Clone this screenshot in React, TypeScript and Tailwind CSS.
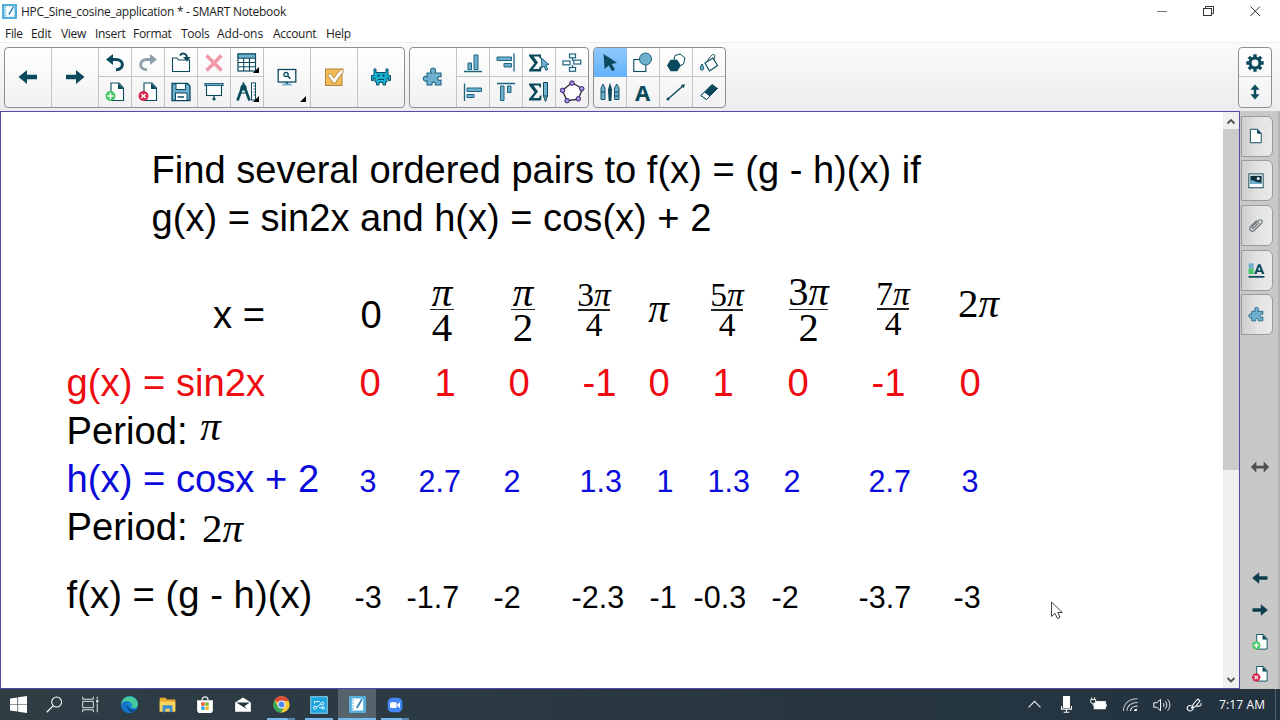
import type { ReactNode } from "react";
import clsx from "clsx";

const NAVY = "#0b4a5c";
const SKY = "#6fb0cf";

function Icon({ size = 24, children }: { size?: number; children: ReactNode }) {
  return (
    <svg width={size} height={size} viewBox="0 0 24 24" fill="none" className="block shrink-0">
      {children}
    </svg>
  );
}

/* ---------- toolbar icons ---------- */

function ArrowLeft({ size = 24, color = NAVY }: { size?: number; color?: string }) {
  return (
    <Icon size={size}>
      <path d="M2.500 12 L11 5 V9.800 H21 V14.200 H11 V19 Z" fill={color} />
    </Icon>
  );
}

function ArrowRight({ size = 24, color = NAVY }: { size?: number; color?: string }) {
  return (
    <Icon size={size}>
      <path d="M21.500 12 L13 5 V9.800 H3 V14.200 H13 V19 Z" fill={color} />
    </Icon>
  );
}

function Undo() {
  return (
    <Icon>
      <path d="M8 8.500 H13 C21.500 8.500 21.500 19 13 18.700" stroke={NAVY} strokeWidth="3" />
      <path d="M3 8.500 L10 3 V14 Z" fill={NAVY} />
    </Icon>
  );
}

function Redo() {
  return (
    <Icon>
      <path d="M16 8.500 H11 C2.500 8.500 2.500 19 11 18.700" stroke="#8b9fa9" strokeWidth="2.800" />
      <path d="M21 8.500 L14 3 V14 Z" fill="#8b9fa9" />
    </Icon>
  );
}

function OpenFile() {
  return (
    <Icon>
      <path d="M3.500 20.500 V7 H8 L9.500 9 H20.500 V20.500 Z" fill="#fff" stroke={NAVY} strokeWidth="1.1" />
      <path d="M11 4.500 C13 1.500 17 2 18 6" stroke={NAVY} strokeWidth="2" />
      <path d="M14 6 H21.500 L18 10.500 Z" fill={NAVY} />
    </Icon>
  );
}

function Cross() {
  return (
    <Icon>
      <path d="M4.500 4.500 L19.500 19.500 M19.500 4.500 L4.500 19.500" stroke="#f09aa8" strokeWidth="3.6" />
    </Icon>
  );
}

function Table() {
  return (
    <Icon>
      <rect x="3" y="3" width="17.5" height="17" fill="#fff" stroke={NAVY} strokeWidth="1.2" />
      <rect x="3" y="3" width="17.5" height="4.2" fill={SKY} stroke={NAVY} strokeWidth="1" />
      <path d="M3 11.500 H20.500 M3 15.700 H20.500 M8.700 7 V20 M14.500 7 V20" stroke={NAVY} strokeWidth="1.1" />
    </Icon>
  );
}

function PageAdd({ size = 24 }: { size?: number }) {
  return (
    <Icon size={size}>
      <path d="M8 3 H16 L20.500 8 V20.500 H8 Z" fill="#fff" stroke={NAVY} strokeWidth="1.1" />
      <path d="M15 3 L21 9 H15 Z" fill={NAVY} />
      <circle cx="7.5" cy="16" r="5" fill="#45c766" />
      <path d="M7.500 12.800 V19.200 M4.300 16 H10.700" stroke="#fff" strokeWidth="1.5" />
    </Icon>
  );
}

function PageDelete({ size = 24 }: { size?: number }) {
  return (
    <Icon size={size}>
      <path d="M8 3 H16 L20.500 8 V20.500 H8 Z" fill="#fff" stroke={NAVY} strokeWidth="1.1" />
      <path d="M15 3 L21 9 H15 Z" fill={NAVY} />
      <circle cx="7.5" cy="16" r="5" fill="#d52a50" />
      <path d="M5.400 13.900 L9.600 18.100 M9.600 13.900 L5.400 18.100" stroke="#fff" strokeWidth="1.4" />
    </Icon>
  );
}

function Save() {
  return (
    <Icon>
      <path d="M3 3.500 H18.500 L21 6 V20.500 H3 Z" fill={SKY} stroke={NAVY} strokeWidth="1.3" />
      <rect x="7" y="3.5" width="9.5" height="6" fill="#fff" stroke={NAVY} />
      <rect x="6.5" y="13" width="11.5" height="7.5" fill="#fff" stroke={NAVY} />
      <path d="M8.500 17 H15" stroke={NAVY} strokeWidth="1.5" />
    </Icon>
  );
}

function ScreenShade() {
  return (
    <Icon>
      <rect x="4.5" y="4" width="15" height="11.5" fill="#fff" stroke={NAVY} strokeWidth="1.1" />
      <path d="M2.500 4.500 H21.500" stroke={NAVY} strokeWidth="3.2" />
      <path d="M3.500 4.500 H20.500" stroke={SKY} strokeWidth="1.6" />
      <path d="M12 15.500 V19" stroke={NAVY} strokeWidth="1.2" />
      <circle cx="12" cy="19" r="1.6" fill={NAVY} />
    </Icon>
  );
}

function Measure() {
  return (
    <Icon>
      <path d="M8.500 2.500 V6" stroke={NAVY} strokeWidth="2" />
      <path d="M7 8 L2.500 20.500 M10 8 L14.500 20.500" stroke={NAVY} strokeWidth="2.6" />
      <path d="M5 13 H12" stroke={NAVY} strokeWidth="1" />
      <circle cx="8.5" cy="7.5" r="3" fill={NAVY} />
      <rect x="16.5" y="3" width="4" height="17" fill="#fff" stroke={NAVY} strokeWidth="1" />
      <path d="M18.500 6 H20.500 M18.500 9 H20.500 M18.500 12 H20.500 M18.500 15 H20.500" stroke={NAVY} strokeWidth=".9" />
    </Icon>
  );
}

function Display() {
  return (
    <Icon>
      <rect x="3.2" y="4.5" width="17.6" height="12.5" fill="#fff" stroke={NAVY} strokeWidth="1.3" />
      <circle cx="11" cy="9.5" r="2.2" fill="#d4e8f2" stroke={NAVY} strokeWidth="1.2" />
      <path d="M12.600 11 L15.400 13.600" stroke={NAVY} strokeWidth="1.5" />
      <path d="M12 17 V19" stroke={NAVY} strokeWidth="2" />
      <path d="M7.500 19.500 H16.500" stroke={SKY} strokeWidth="1.8" />
    </Icon>
  );
}

function Assess() {
  return (
    <Icon>
      <rect x="3.5" y="4" width="16.5" height="16.5" fill="#f3ba58" stroke="#b28840" strokeWidth="1" />
      <path
        d="M5.500 10.500 L8.500 8.500 L12 13 C14.500 9 17 6 21 3.500 V7.500 C18 10.500 15.500 14 13.500 18 H11 C9.500 15 7.500 12.500 5.500 10.500 Z"
        fill="#fff"
        stroke="#a9803a"
        strokeWidth=".9"
      />
    </Icon>
  );
}

function Monster() {
  return (
    <Icon>
      <path
        d="M5 4 H7 V7.500 H17 V4 H19 V10.500 H21.500 V15.500 H19.500 V13 H18 V17 H16.500 V20 H14 V17.500 H10 V20 H7.500 V17 H6 V13 H4.500 V15.500 H2.500 V10.500 H5 Z"
        fill="#17b1d4"
        stroke="#0b5267"
        strokeWidth="1"
      />
      <path d="M8.500 9.500 H10.500 V11.500 H8.500 Z M13.500 9.500 H15.500 V11.500 H13.500 Z" fill={NAVY} />
      <path d="M9 14.500 H15" stroke={NAVY} />
    </Icon>
  );
}

function Puzzle({ size = 24 }: { size?: number }) {
  return (
    <Icon size={size}>
      <path
        d="M6 8 H10.500 C8.600 5.500 9.800 3 12 3 C14.400 3 15.500 5.500 13.700 8 H20 V11.800 C17.500 11 16.500 12.500 16.500 13.500 C16.500 14.700 17.800 15.800 20 15 V20 H14.300 C14.800 17.800 13.700 17.100 12.700 17.100 C11.500 17.100 10.500 18.100 11 20 H6 V15.800 C4.300 16.800 2.300 15.700 2.300 13.700 C2.300 11.700 4.500 10.500 6 11.800 Z"
        fill={SKY}
        stroke="#1d6480"
        strokeWidth="1.1"
      />
    </Icon>
  );
}

function Bars({ d, base }: { d: string; base: string }) {
  return (
    <Icon>
      <path d={d} fill={SKY} stroke="#1d6480" strokeWidth="1" />
      <path d={base} stroke="#1d6480" strokeWidth="1.3" />
    </Icon>
  );
}

function Sigma({ pen }: { pen?: boolean }) {
  return (
    <Icon>
      <path d="M2 3.500 H14 V7.500 H12.800 L12 5.500 H6.500 L11 11.500 L6 18 H12 L13 15.500 H14.500 L14 20.500 H2 V19 L7.500 12.200 L2 5 Z" fill={NAVY} />
      {pen ? (
        <path d="M16.500 2.500 H20.500 V16 L18.500 21.500 L16.500 16 Z M16.500 16 H20.500" fill={SKY} stroke={NAVY} strokeWidth="1" />
      ) : (
        <path d="M14.500 7 L22 13.500 L18.800 14 L20.800 18.500 L18.800 19.300 L17 15 L14.800 17 Z" fill={SKY} stroke="#1d6480" strokeWidth="1" />
      )}
    </Icon>
  );
}

function FlowBoxes() {
  return (
    <Icon>
      <g fill="#fff" stroke="#1d6480" strokeWidth="1.2">
        <path d="M12.500 6.500 V10 M12.500 14 V17" />
        <rect x="9.5" y="3" width="6" height="3.800" />
        <rect x="3" y="10" width="7" height="3.800" />
        <rect x="13.800" y="9.200" width="7" height="3.800" />
        <rect x="9.500" y="16.500" width="6" height="3.800" />
      </g>
    </Icon>
  );
}

function Pentagon() {
  return (
    <Icon size={26}>
      <path d="M12 3.500 L21.500 9 L18 18.500 L7.500 20 L3 10.500 Z" fill="#fff" stroke="#2c2b31" strokeWidth="1.2" />
      <g fill="#a78ce6" stroke="#33245f" strokeWidth=".9">
        <circle cx="12" cy="3.8" r="2.1" />
        <circle cx="21" cy="9" r="2.1" />
        <circle cx="17.8" cy="18.3" r="2.1" />
        <circle cx="7.5" cy="20" r="2.1" />
        <circle cx="3.3" cy="10.5" r="2.1" />
      </g>
    </Icon>
  );
}

function Pointer() {
  return (
    <Icon>
      <path d="M5.500 3 L19 11.800 L13.700 13 L17 18.500 L14.200 20.300 L10.800 14.600 L6.600 18 Z" fill={NAVY} />
    </Icon>
  );
}

function Shapes() {
  return (
    <Icon>
      <rect x="2.8" y="8.500" width="12" height="12" fill="#fff" stroke={NAVY} strokeWidth="1.1" />
      <circle cx="14.5" cy="8" r="6" fill={SKY} stroke="#1d6480" strokeWidth="1" />
    </Icon>
  );
}

function Polygons() {
  return (
    <Icon>
      <path d="M11 4.500 L16 3 L21 7 L19.500 13 L14 16 L9.500 11 Z" fill="#fff" stroke={NAVY} strokeWidth="1" />
      <path d="M6.500 8.800 H13.300 L16.800 14.500 L13.300 20.300 H6.500 L3 14.500 Z" fill={NAVY} />
    </Icon>
  );
}

function Bucket() {
  return (
    <Icon>
      <path d="M8 12 L16 7 L20.500 14.500 L12.500 20 Z" fill="#fff" stroke={NAVY} strokeWidth="1.2" />
      <path d="M10 11 C12 7 14.500 3.500 16.500 3.500 C18.500 3.500 18 6.500 16.500 9" stroke={NAVY} strokeWidth="1" />
      <path d="M5 13 C2.500 17 3 19 5 19 C7 19 7.500 17 5 13 Z" fill={SKY} stroke={NAVY} />
    </Icon>
  );
}

function Pens() {
  return (
    <Icon>
      <g fill={SKY} stroke={NAVY} strokeWidth=".9">
        <path d="M3 8 L5 4 L7 8 V19.500 H3 Z" />
        <path d="M16.500 8 L18.800 4 L21 8 V19.500 H16.500 Z" />
      </g>
      <path d="M10 9.500 L12 2.500 L14 9.500 L13.300 21 H10.700 Z" fill={NAVY} />
      <path d="M3 12 H7 M16.500 12 H21 M16.500 16 H21" stroke={NAVY} />
    </Icon>
  );
}

function LineTool() {
  return (
    <Icon>
      <path d="M4 19 L20 5" stroke={NAVY} strokeWidth="1.4" />
      <path d="M20.800 4.200 L19.800 8.200 L16.800 5 Z" fill={NAVY} />
      <circle cx="4" cy="19" r="1.5" fill={NAVY} />
    </Icon>
  );
}

function Eraser() {
  return (
    <Icon>
      <path d="M4 15.500 L15 4.500 L20.500 8.500 L9.500 19.500 Z" fill={NAVY} stroke={NAVY} strokeWidth="1" />
      <path d="M4 15.500 L7.500 12 L13 16 L9.500 19.500 Z" fill="#fff" stroke={NAVY} strokeWidth="1" />
    </Icon>
  );
}

function Gear() {
  return (
    <Icon size={22}>
      <path
        d="M12 2.500 V21.500 M2.500 12 H21.500 M5.300 5.300 L18.700 18.700 M18.700 5.300 L5.300 18.700"
        stroke={NAVY}
        strokeWidth="3.6"
      />
      <circle cx="12" cy="12" r="5.4" fill="#fafafa" stroke={NAVY} strokeWidth="3.4" />
    </Icon>
  );
}

function ArrowsVertical() {
  return (
    <Icon size={20}>
      <path d="M12 3 L17.500 9.300 H13.500 V14.700 H17.500 L12 21 L6.500 14.700 H10.500 V9.300 H6.500 Z" fill={NAVY} />
    </Icon>
  );
}

/* ---------- toolbar layout ---------- */

function Cell({ children, wide, active, more }: { children: ReactNode; wide?: boolean; active?: boolean; more?: boolean }) {
  return (
    <div
      className={clsx(
        "relative flex items-center justify-center shrink-0 pr-[2px]",
        wide ? "w-[47px] h-[58px]" : "w-[33px] h-[29px]",
        active && "bg-gradient-to-b from-[#8fc8fb] to-[#61b2fa]"
      )}
    >
      {children}
      {more && (
        <span className="absolute right-[5px] bottom-[4px] w-0 h-0 border-l-[6px] border-l-transparent border-b-[6px] border-b-black" />
      )}
    </div>
  );
}

function CellGrid({ rows }: { rows: ReactNode[] }) {
  return (
    <div className="flex flex-col divide-y divide-[#c4c4c6]">
      {rows.map((row, i) => (
        <div key={i} className={clsx("flex", i === 0 ? "h-[29px]" : "h-[30px]")}>
          {row}
        </div>
      ))}
    </div>
  );
}

function Group({ children, className }: { children: ReactNode; className: string }) {
  return (
    <div
      className={clsx(
        "flex h-[61px] shrink-0 overflow-hidden rounded border border-[#8f8f91] bg-gradient-to-b from-white to-[#f1f1f3]",
        className
      )}
    >
      {children}
    </div>
  );
}

const rule = "shadow-[inset_-1px_0_0_#c4c4c6]";

function Small({ items, active, more }: { items: ReactNode[]; active?: number; more?: number }) {
  return (
    <>
      {items.map((item, i) => (
        <div key={i} className={rule}>
          <Cell active={active === i} more={more === i}>
            {item}
          </Cell>
        </div>
      ))}
    </>
  );
}

function Toolbar() {
  return (
    <div className="flex h-[69px] items-start bg-gradient-to-b from-[#fbfbfc] to-[#ececef] border-t border-[#efeff1] pt-1 pl-1 pr-2">
      <Group className="w-[401px]">
        <div className={rule}><Cell wide><ArrowLeft /></Cell></div>
        <div className={rule}><Cell wide><ArrowRight /></Cell></div>
        <CellGrid
          rows={[
            <Small key="a" more={4} items={[<Undo />, <Redo />, <OpenFile />, <Cross />, <Table />]} />,
            <Small key="b" more={4} items={[<PageAdd />, <PageDelete />, <Save />, <ScreenShade />, <Measure />]} />,
          ]}
        />
        <div className={rule}><Cell wide more><Display /></Cell></div>
        <div className={rule}><Cell wide><Assess /></Cell></div>
        <Cell wide><Monster /></Cell>
      </Group>
      <Group className="ml-1 w-[180px]">
        <div className={rule}><Cell wide><Puzzle /></Cell></div>
        <CellGrid
          rows={[
            <Small
              key="a"
              items={[
                <Bars d="M7 12 H10.500 V18.500 H7 Z M13 4 H17 V18.500 H13 Z" base="M3 20.500 H21" />,
                <Bars d="M3 6 H17.500 V9.500 H3 Z M10 12.500 H17.500 V16 H10 Z" base="M20 2.500 V20.500" />,
                <Sigma />,
                <FlowBoxes />,
              ]}
            />,
            <Small
              key="b"
              items={[
                <Bars d="M6 8 H20.500 V11.500 H6 Z M6 14.500 H13 V17.500 H6 Z" base="M3.500 3.500 V21" />,
                <Bars d="M6.500 6 H10 V20.500 H6.500 Z M13.500 6 H17 V12.500 H13.500 Z" base="M3 3.500 H21" />,
                <Sigma pen />,
                <Pentagon />,
              ]}
            />,
          ]}
        />
      </Group>
      <Group className="ml-1 w-[133px]">
        <CellGrid
          rows={[
            <Small key="a" active={0} items={[<Pointer />, <Shapes />, <Polygons />, <Bucket />]} />,
            <Small
              key="b"
              items={[
                <Pens />,
                <span className="font-['Noto_Sans',sans-serif] text-[22px] font-bold leading-none text-[#0b4a5c]">A</span>,
                <LineTool />,
                <Eraser />,
              ]}
            />,
          ]}
        />
      </Group>
      <Group className="ml-auto w-[34px]">
        <CellGrid rows={[<Cell key="a"><Gear /></Cell>, <Cell key="b"><ArrowsVertical /></Cell>]} />
      </Group>
    </div>
  );
}

/* ---------- window chrome ---------- */

function NotebookLogo({ size }: { size: number }) {
  return (
    <Icon size={size}>
      <rect x="0" y="0" width="24" height="24" fill="#54aedb" />
      <rect x="4" y="3.5" width="16" height="17" fill="#fff" />
      <path d="M18.500 4 L11 17" stroke="#2f7fb3" strokeWidth="2.4" />
      <path d="M4 6 H7 M4 10 H7 M4 14 H7 M4 18 H7" stroke="#54aedb" strokeWidth="1.5" />
    </Icon>
  );
}

function TitleBar() {
  return (
    <div className="flex h-[23px] items-center bg-white pl-[2px] pr-[15px]">
      <NotebookLogo size={15} />
      <span className="ml-1 whitespace-pre pt-px text-[12px] leading-none tracking-[-0.28px] text-[#1c1c1c]">
        HPC_Sine_cosine_application * - SMART Notebook
      </span>
      <svg width="120" height="23" viewBox="0 0 120 23" fill="none" className="ml-auto">
        <path d="M12 11.500 H22" stroke="#777" />
        <rect x="58.5" y="8.5" width="8" height="7" stroke="#333" />
        <path d="M60.500 8 V6.500 H68.500 V13.500 H67" stroke="#333" />
        <path d="M105.500 6.500 L115 16 M115 6.500 L105.500 16" stroke="#333" />
      </svg>
    </div>
  );
}

function MenuBar() {
  const item = "shrink-0 whitespace-nowrap";
  return (
    <div className="flex h-[19px] items-center bg-white pl-[5px] pt-[2px] text-[12px] leading-none tracking-[-0.3px] text-[#1c1c1c]">
      <span className={clsx(item, "w-[26px]")}>File</span>
      <span className={clsx(item, "w-[30px]")}>Edit</span>
      <span className={clsx(item, "w-[34px]")}>View</span>
      <span className={clsx(item, "w-[38px]")}>Insert</span>
      <span className={clsx(item, "w-[48px]")}>Format</span>
      <span className={clsx(item, "w-[36px]")}>Tools</span>
      <span className={clsx(item, "w-[56px] tracking-[-0.05px]")}>Add-ons</span>
      <span className={clsx(item, "w-[53px]")}>Account</span>
      <span className={item}>Help</span>
    </div>
  );
}

/* ---------- notebook page ---------- */

type Label = { x: number; y: number; text: string; size: number; color?: string };

const RED = "text-[#ee0a0f]";
const BLUE = "text-[#0909dc]";

// x is the left edge and y the baseline, both in page pixels
const labels: Label[] = [
  { x: 151, y: 72, text: "Find several ordered pairs to f(x) = (g - h)(x) if", size: 38.1 },
  { x: 151, y: 120, text: "g(x) = sin2x and h(x) = cos(x) + 2", size: 38.1 },
  { x: 212.5, y: 217, text: "x =", size: 38.2 },
  { x: 360, y: 217, text: "0", size: 38.2 },
  { x: 66, y: 285, text: "g(x) = sin2x", size: 38.2, color: RED },
  { x: 66, y: 333, text: "Period:", size: 38.2 },
  { x: 66, y: 381, text: "h(x) = cosx + 2", size: 38.2, color: BLUE },
  { x: 66, y: 429, text: "Period:", size: 38.2 },
  { x: 66, y: 497, text: "f(x) = (g - h)(x)", size: 38.3 },
];

const gRow: [number, string][] = [
  [359, "0"], [434, "1"], [508, "0"], [582, "-1"], [648, "0"], [712, "1"], [787, "0"], [871, "-1"], [959, "0"],
];
const hRow: [number, string][] = [
  [359, "3"], [418, "2.7"], [503, "2"], [579, "1.3"], [656, "1"], [707, "1.3"], [783, "2"], [868, "2.7"], [961, "3"],
];
const fRow: [number, string][] = [
  [354, "-3"], [406, "-1.7"], [493, "-2"], [571, "-2.3"], [649, "-1"], [693, "-0.3"], [771, "-2"], [858, "-3.7"], [953, "-3"],
];

for (const [x, text] of gRow) labels.push({ x, y: 285, text, size: 38.2, color: RED });
for (const [x, text] of hRow) labels.push({ x, y: 380, text, size: 30.5, color: BLUE });
for (const [x, text] of fRow) labels.push({ x, y: 496, text, size: 30.5 });

type MathItem = { x: number; w: number; y: number; num: string; den?: string; size: number };

const math: MathItem[] = [
  { x: 429, w: 24, y: 195, num: "", den: "4", size: 41 },
  { x: 510, w: 24, y: 195, num: "", den: "2", size: 41 },
  { x: 577, w: 32, y: 194, num: "3", den: "4", size: 33.5 },
  { x: 646, w: 23, y: 211, num: "", size: 41 },
  { x: 710, w: 32, y: 194, num: "5", den: "4", size: 33.5 },
  { x: 788, w: 39, y: 193, num: "3", den: "2", size: 40.5 },
  { x: 876, w: 32, y: 193, num: "7", den: "4", size: 33.5 },
  { x: 956, w: 43, y: 206, num: "2", size: 41 },
  { x: 198, w: 23, y: 329, num: "", size: 41 },
  { x: 200, w: 43, y: 431, num: "2", size: 41 },
];

function MathText({ item }: { item: MathItem }) {
  return (
    <div
      className="absolute flex flex-col items-center whitespace-nowrap font-['Liberation_Serif',serif] leading-[0.78]"
      style={{ left: item.x, top: item.y - item.size * 0.7275, width: item.w, fontSize: item.size }}
    >
      <span>
        {item.num}
        <i>π</i>
      </span>
      {item.den && (
        <>
          <span className={clsx("h-[1.5px] w-full shrink-0 bg-[#222]", item.num ? "mt-[1.5px]" : "-mt-[0.5px]")} />
          <span className="mt-[1.5px]">{item.den}</span>
        </>
      )}
    </div>
  );
}

function Page() {
  return (
    <div className="relative flex-1 overflow-hidden bg-white text-black">
      {labels.map((l, i) => (
        <span
          key={i}
          className={clsx("absolute whitespace-pre font-['Liberation_Sans',sans-serif] leading-none", l.color)}
          style={{ left: l.x - 0.4, top: l.y - 0.5 - l.size * 0.8465, fontSize: l.size }}
        >
          {l.text}
        </span>
      ))}
      {math.map((m, i) => (
        <MathText key={i} item={m} />
      ))}
      <svg width="14" height="20" viewBox="0 0 14 20" fill="none" className="absolute left-[1049px] top-[489px]">
        <path
          d="M1.500 1 V15.500 L5 12.300 L7.500 17.500 L10 16.300 L7.700 11.500 H12.300 Z"
          fill="#fff"
          stroke="#444"
          strokeWidth="1"
        />
      </svg>
    </div>
  );
}

function ScrollBar() {
  return (
    <div className="flex w-4 flex-col items-center bg-[#f0f0f0]">
      <svg width="16" height="17" viewBox="0 0 16 17" fill="none">
        <path d="M4.500 11.500 L8 8 L11.500 11.500" stroke="#505050" strokeWidth="1.8" />
      </svg>
      <div className="h-[341px] w-full bg-[#cbcbcb]" />
      <svg width="16" height="17" viewBox="0 0 16 17" fill="none" className="mt-auto">
        <path d="M4.500 7 L8 10.500 L11.500 7" stroke="#505050" strokeWidth="1.8" />
      </svg>
    </div>
  );
}

/* ---------- side panel ---------- */

function SideTab({ children }: { children: ReactNode }) {
  return (
    <div className="flex h-[41px] w-8 items-center justify-center rounded-r-md border border-[#9b9b9b] bg-gradient-to-r from-[#cfcfcf] via-[#e3e3e3] to-[#e9e9e9] pr-[2px]">
      {children}
    </div>
  );
}

function SidePanel() {
  return (
    <div className="flex w-10 flex-col border-r-2 border-[#b4b4b4] bg-[#c8c8c8] pl-px">
      <div className="mt-[4.5px] flex flex-col gap-[3.7px]">
        <SideTab>
          <Icon size={18}>
            <path d="M4.500 3 H14 L19 8.500 V21 H4.500 Z" fill="#fff" stroke={NAVY} strokeWidth="1.3" />
            <path d="M13.500 3 L19.500 9 H13.500 Z" fill={NAVY} />
          </Icon>
        </SideTab>
        <SideTab>
          <Icon size={18}>
            <rect x="2.5" y="2.5" width="19" height="18.5" fill="#fff" stroke={NAVY} strokeWidth="1.3" />
            <rect x="4.5" y="5" width="15" height="11" fill="#0d3341" />
            <path d="M4.500 11.500 C8 9.500 11 14.500 19.500 14 V16 H4.500 Z" fill={SKY} />
            <circle cx="15" cy="8.5" r="2" fill="#fff" />
          </Icon>
        </SideTab>
        <SideTab>
          <Icon size={18}>
            <path
              d="M16.500 8.500 L9 16 C7.500 17.500 5.800 15.800 7.200 14.300 L15.500 6 C18.300 3.500 22 6.500 19.500 9.700 L10 19 C6 22.500 1.500 18 4.800 14 L13 6"
              stroke="#6d777c"
              strokeWidth="1.5"
            />
          </Icon>
        </SideTab>
        <SideTab>
          <Icon size={19}>
            <rect x="2" y="3" width="6.5" height="6.5" fill={SKY} />
            <rect x="2" y="9.5" width="6.5" height="7" fill="#47c767" />
            <path
              d="M9 16.500 L14 4 H17 L22 16.500 H18.800 L18 14 H13 L12.200 16.500 Z M13.800 11.700 H17.200 L15.500 7 Z"
              fill={NAVY}
              fillRule="evenodd"
            />
            <path d="M2 20 H22" stroke={NAVY} strokeWidth="2.2" />
          </Icon>
        </SideTab>
        <SideTab>
          <Puzzle size={19} />
        </SideTab>
      </div>
      <div className="mt-[121px] flex justify-center">
        <Icon size={22}>
          <path d="M2 12 L8 6 V10.500 H16 V6 L22 12 L16 18 V13.500 H8 V18 Z" fill="#505050" />
        </Icon>
      </div>
      <div className="mt-auto flex flex-col items-center gap-[12px] pb-[5px] pl-px">
        <ArrowLeft size={20} color="#0d3e4d" />
        <ArrowRight size={20} color="#0d3e4d" />
        <PageAdd size={20} />
        <PageDelete size={20} />
      </div>
    </div>
  );
}

/* ---------- taskbar ---------- */

function Task({ children, open, split, active }: { children: ReactNode; open?: boolean; split?: boolean; active?: boolean }) {
  return (
    <div className={clsx("relative flex h-full w-[38px] items-center justify-center", active && "bg-[#55646c]")}>
      {children}
      {open && (
        <span
          className={clsx(
            "absolute bottom-0 h-[2px] bg-[#76b9ed]",
            active ? "inset-x-0" : "inset-x-[5px]",
            split && "border-r-[7px] border-[#5585ad]"
          )}
        />
      )}
    </div>
  );
}

function Taskbar() {
  return (
    <div className="flex h-[31px] items-stretch bg-gradient-to-r from-[#2f3e45] to-[#22323f] text-white">
      <div className="flex w-[110px] items-center">
        <div className="flex w-[36px] justify-center">
          <Icon size={17}>
            <path
              d="M0 3.500 L10.500 2 V11.500 H0 Z M11.500 1.800 L24 0 V11.500 H11.500 Z M0 12.500 H10.500 V22 L0 20.500 Z M11.500 12.500 H24 V24 L11.500 22.200 Z"
              fill="#fff"
            />
          </Icon>
        </div>
        <div className="flex w-[36px] justify-center">
          <Icon size={17}>
            <circle cx="15" cy="8.5" r="7" stroke="#fff" strokeWidth="1.5" />
            <path d="M10 14 L1 23" stroke="#fff" strokeWidth="1.7" />
          </Icon>
        </div>
        <div className="flex w-[36px] justify-center">
          <Icon size={17}>
            <path d="M1 1 V4.500 H16 V1 M1 23 V19.500 H16 V23 M1 7.500 H16 V16.500 H1 Z" stroke="#dfe5e8" strokeWidth="1.4" />
            <path d="M21.500 1 V5 M21.500 10.500 V23" stroke="#dfe5e8" strokeWidth="1.4" />
            <rect x="20" y="6" width="3" height="3" fill="#fff" />
          </Icon>
        </div>
      </div>
      <Task>
        <Icon size={17}>
          <circle cx="12" cy="12" r="12" fill="#1687d4" />
          <path d="M1 8 C5 -2 22 -2 24 11 C24.500 17 18 18 14.500 16 C17 13 15 8 10 8 C6 8 2 10 0 13 C0 11 .3 9.500 1 8 Z" fill="#45c99a" />
          <path d="M0 12 C3 6 10 6.500 13 9 C6 9 6 19 15 22.500 C7 26 0 20 0 12 Z" fill="#1674c8" />
          <path d="M10 12 C10 19 17 20 22.500 17.500 C20 21.500 17 23 14.500 23 C9 21 7 15 10 12 Z" fill="#0d4e93" />
        </Icon>
      </Task>
      <Task>
        <Icon size={17}>
          <path d="M1 2.500 H9 L11 5 H23 V22 H1 Z" fill="#e9ad2d" />
          <path d="M1 8 H23 V22 H1 Z" fill="#fbd35f" />
          <path d="M5 13 H19 V23 H15 V18 H9 V23 H5 Z" fill="#3d8ecd" />
        </Icon>
      </Task>
      <Task>
        <Icon size={18}>
          <path d="M8 6 C8 -.5 16 -.5 16 6" stroke="#e8e8e8" strokeWidth="1.8" />
          <path d="M1.500 5.500 H22.500 V20 L20.500 22.500 H3.500 L1.500 20 Z" fill="#fff" />
          <path d="M7 8.500 H11.500 V13 H7 Z" fill="#e85226" />
          <path d="M12.500 8.500 H17 V13 H12.500 Z" fill="#7db62b" />
          <path d="M7 14 H11.500 V18.500 H7 Z" fill="#2c9ddd" />
          <path d="M12.500 14 H17 V18.500 H12.500 Z" fill="#f4b41c" />
        </Icon>
      </Task>
      <Task>
        <Icon size={18}>
          <path d="M1.500 8.500 L12 2 L22.500 8.500 V21 H1.500 Z" fill="#fff" />
          <path d="M3 8.500 H21 L14 13.500 L17.500 17.500 L9.500 12.500 Z" fill="#26343c" />
        </Icon>
      </Task>
      <Task open split>
        <Icon size={17}>
          <circle cx="12" cy="12" r="11.5" fill="#f6c935" />
          <path d="M12 12 L2 6 A11.500 11.500 0 0 1 22.500 7 L12 7 Z" fill="#dd4b39" />
          <path d="M2 6 A11.500 11.500 0 0 0 11 23.500 L16.500 14.500 L12 17 L7 14.500 Z" fill="#39a557" />
          <circle cx="12" cy="12" r="5.5" fill="#fff" />
          <circle cx="12" cy="12" r="4.2" fill="#4a87ec" />
        </Icon>
      </Task>
      <Task open>
        <Icon size={18}>
          <rect x="1" y="1" width="22" height="22" fill="#1da3dd" stroke="#83cdec" strokeWidth="1.5" />
          <path d="M13 7.500 H6 V10 M8 15.500 L15 10.500 M12 15.500 H16" stroke="#fff" strokeWidth="1.2" />
          <circle cx="6.5" cy="15.5" r="2" stroke="#fff" strokeWidth="1.2" />
          <circle cx="16.5" cy="10" r="2" stroke="#fff" strokeWidth="1.2" />
          <circle cx="17.5" cy="16" r="1.7" stroke="#fff" strokeWidth="1.2" />
        </Icon>
      </Task>
      <Task open active>
        <NotebookLogo size={17} />
      </Task>
      <Task open split>
        <Icon size={16}>
          <rect x="1" y="1" width="22" height="22" rx="7" fill="#4386f5" />
          <rect x="4.5" y="8" width="10" height="8.5" rx="1.8" fill="#fff" />
          <path d="M15.500 11 L19.500 8 V16.500 L15.500 13.500 Z" fill="#fff" />
        </Icon>
      </Task>
      <div className="ml-auto flex items-center">
        <div className="flex w-8 justify-center">
          <Icon size={15}>
            <path d="M2.500 16.500 L12 7 L21.500 16.500" stroke="#e8edf0" strokeWidth="1.8" />
          </Icon>
        </div>
        <div className="flex w-8 justify-center">
          <Icon size={17}>
            <rect x="7" y="0" width="10" height="17" rx="1" fill="#fff" />
            <path d="M5 14 V18.500 H19 V14 M12 18.500 V23 M8 23 H16" stroke="#fff" strokeWidth="1.5" />
          </Icon>
        </div>
        <div className="flex w-8 justify-center">
          <Icon size={17}>
            <rect x="6" y="8" width="15.5" height="10" fill="#fff" stroke="#fff" strokeWidth="1.5" />
            <path d="M22.500 11 V15" stroke="#fff" strokeWidth="2" />
            <path
              d="M1 5 H8 V9 L4.500 11 L1 9 Z M2.500 2 V5 M6.500 2 V5 M4.500 11 V14"
              fill="#26343c"
              stroke="#fff"
              strokeWidth="1.3"
            />
          </Icon>
        </div>
        <div className="flex w-8 justify-center">
          <Icon size={17}>
            <g stroke="#b9c4ca" strokeWidth="1.5">
              <path d="M2 21 C2 11 10 4 22 4" />
              <path d="M7 21 C7 14 13 9 22 9" />
              <path d="M12 21 C12 17 16 14 22 14" stroke="#fff" />
            </g>
            <path d="M17 21 C17 19 19 18 21 18 V21 Z" fill="#fff" />
          </Icon>
        </div>
        <div className="flex w-8 justify-center">
          <Icon size={18}>
            <path d="M1 9 H5 L10 4.500 V19.500 L5 15 H1 Z" stroke="#fff" strokeWidth="1.3" />
            <path
              d="M13.500 9.500 C15 11 15 13 13.500 14.500 M16.500 7 C19 10 19 14 16.500 17 M19.500 4.500 C23.500 9 23.500 15 19.500 19.500"
              stroke="#fff"
              strokeWidth="1.2"
            />
          </Icon>
        </div>
        <div className="flex w-8 justify-center">
          <Icon size={18}>
            <path
              d="M9 16 L11 11 L17 4 L20 6.500 L14 14 Z M9 13.500 C5 11 1 15 4 18.500 C7 21.500 11 19 11 16 M15 13 C19 15 23 12 21 9.500"
              stroke="#fff"
              strokeWidth="1.4"
            />
          </Icon>
        </div>
        <span className="ml-[9px] w-[47px] whitespace-nowrap text-[12px] leading-none tracking-[0.15px]">7:17 AM</span>
        <span className="ml-[9px] h-[31px] w-[5px] border-l border-[#53626b]" />
      </div>
    </div>
  );
}

export default function App() {
  return (
    <div className="flex h-[720px] w-[1280px] flex-col overflow-hidden bg-white font-['Open_Sans','Noto_Sans',sans-serif]">
      <TitleBar />
      <MenuBar />
      <Toolbar />
      <div className="flex min-h-0 flex-1">
        <div className="flex flex-1 border border-[#5548a8]">
          <Page />
          <ScrollBar />
        </div>
        <SidePanel />
      </div>
      <Taskbar />
    </div>
  );
}
